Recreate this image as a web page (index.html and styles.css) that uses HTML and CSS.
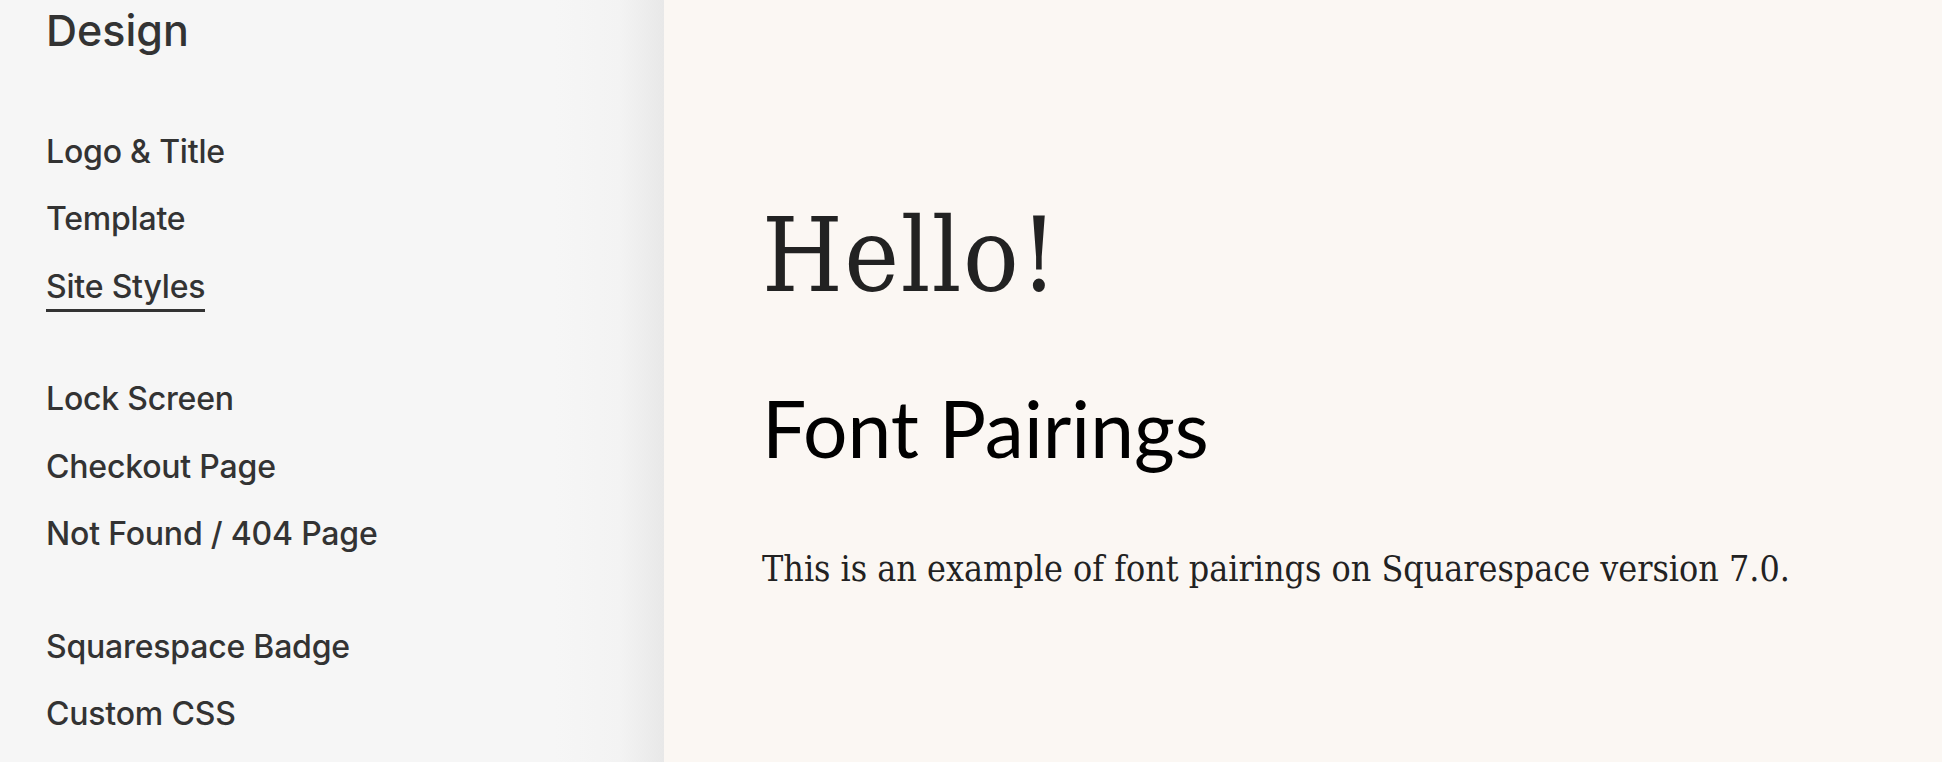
FILE: index.html
```html
<!DOCTYPE html>
<html lang="en">
<head>
<meta charset="utf-8">
<title>Design</title>
<link rel="stylesheet" href="styles.css">
</head>
<body>
<div class="app">
  <aside class="sidebar">
    <h1 class="sidebar-title">Design</h1>
    <nav class="nav">
      <ul class="nav-group">
        <li class="nav-item">Logo &amp; Title</li>
        <li class="nav-item">Template</li>
        <li class="nav-item"><span class="nav-active">Site Styles</span></li>
      </ul>
      <ul class="nav-group">
        <li class="nav-item">Lock Screen</li>
        <li class="nav-item">Checkout Page</li>
        <li class="nav-item">Not Found / 404 Page</li>
      </ul>
      <ul class="nav-group">
        <li class="nav-item">Squarespace Badge</li>
        <li class="nav-item">Custom CSS</li>
      </ul>
    </nav>
  </aside>
  <main class="preview">
    <h1 class="hero-title">Hello!</h1>
    <h2 class="pair-title">Font Pairings</h2>
    <p class="pair-text">This is an example of font pairings on Squarespace version 7.0.</p>
  </main>
</div>
</body>
</html>
```
FILE: styles.css
```css
* { box-sizing: border-box; }
html, body { margin: 0; padding: 0; height: 100%; }
body { background: #fbf7f3; overflow: hidden; }
.app { display: flex; height: 100%; }
.sidebar {
  width: 664px;
  flex: none;
  padding: 4px 0 0 46px;
  background: linear-gradient(to right, #f6f6f6 0, #f6f6f6 555px, #f3f3f3 620px, #e8e8e8 664px);
  color: #333;
  font-family: Inter, "Noto Sans", sans-serif;
  font-weight: 500;
}
.sidebar-title { margin: 0; font-size: 43px; font-weight: 500; line-height: 52px; }
.nav { margin-top: 61.5px; }
.nav-group { list-style: none; margin: 0 0 45px; padding: 0; }
.nav-item { font-size: 32px; line-height: 67.5px; letter-spacing: -0.2px; }
.nav-active { display: inline-block; line-height: 32px; padding-bottom: 6px; border-bottom: 3px solid #333; }
.preview { flex: 1; padding: 194.5px 0 0 98px; }
.hero-title { margin: 0; font-family: "DejaVu Serif", serif; font-stretch: condensed; font-weight: 400; font-size: 103px; line-height: 120px; letter-spacing: 1.5px; color: #222; }
.pair-title { margin: 65.5px 0 0; font-family: Lato, sans-serif; font-weight: 400; font-size: 78.5px; line-height: 96px; color: #000; }
.pair-text { margin: 68.5px 0 0; font-family: "DejaVu Serif", serif; font-stretch: condensed; font-size: 35.5px; line-height: 48px; color: #222; }
```
